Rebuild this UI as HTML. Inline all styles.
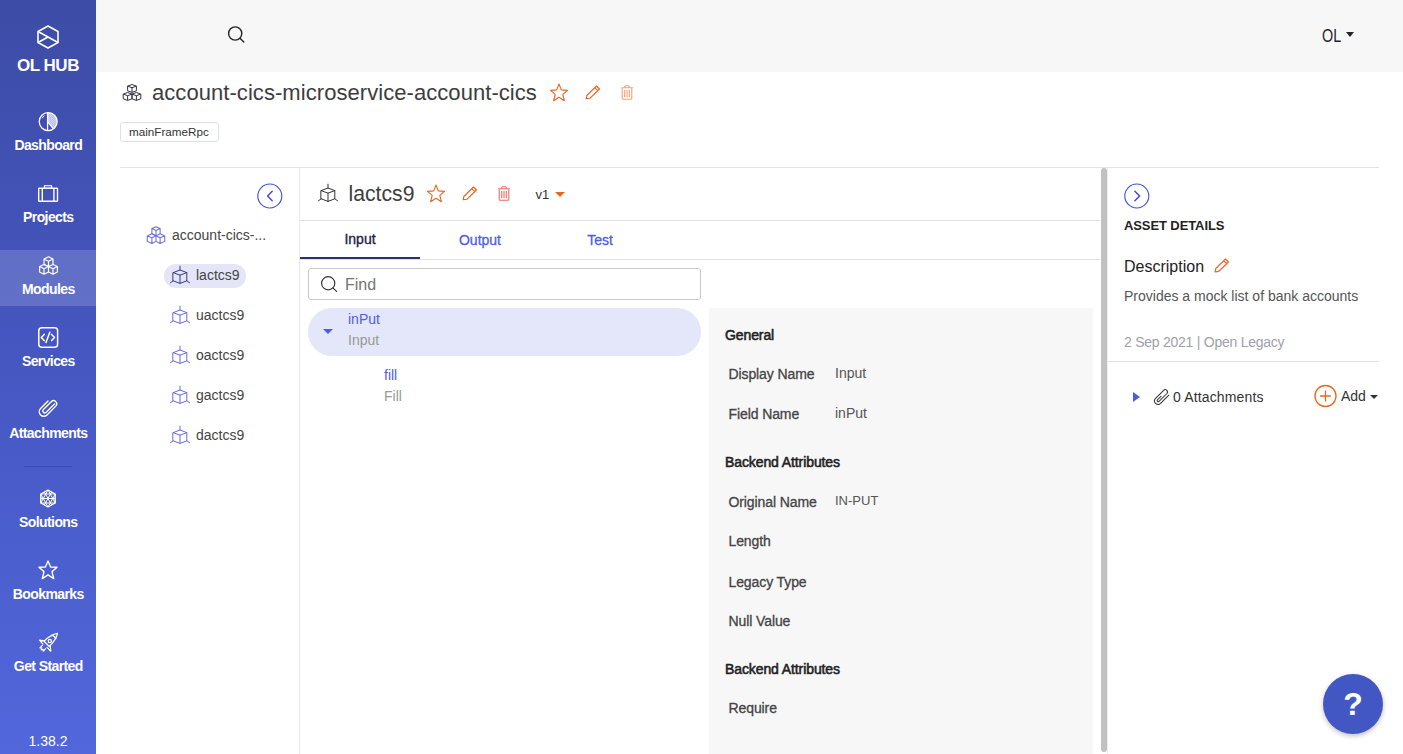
<!DOCTYPE html>
<html><head><meta charset="utf-8">
<style>
*{margin:0;padding:0;box-sizing:border-box}
html,body{width:1403px;height:754px;overflow:hidden;background:#fff;font-family:"Liberation Sans",sans-serif;color:#333}
.a{position:absolute;white-space:nowrap}
svg{position:absolute;overflow:visible}
#side{position:absolute;left:0;top:0;width:96px;height:754px;background:linear-gradient(180deg,#3d4ca6 0%,#4556c0 45%,#5267dc 100%)}
.nl{position:absolute;left:0;width:96px;text-align:center;color:#fff;font-weight:bold;font-size:14px;line-height:14px;letter-spacing:-0.6px;text-indent:0.6px}
#hdr{position:absolute;left:96px;top:0;width:1307px;height:72px;background:#f7f7f7}
.t14{font-size:14px;line-height:14px}
</style></head><body>
<div id="side">
  <!-- logo -->
  <svg style="left:37px;top:25px" width="22" height="24" viewBox="0 0 22 24" fill="none" stroke="#fff" stroke-width="1.6" stroke-linejoin="round">
    <path d="M11 1 L21 6.5 L21 17.5 L11 23 L1 17.5 L1 6.5 Z"/>
    <path d="M1 6.5 L21 17.5"/>
    <path d="M11 12 L1 17.5"/>
  </svg>
  <div class="a" style="left:0;width:96px;text-align:center;top:57px;color:#fff;font-weight:bold;font-size:17px;line-height:17px;letter-spacing:-0.5px">OL HUB</div>

  <!-- dashboard -->
  <svg style="left:38px;top:112px" width="20" height="20" viewBox="0 0 20 20" fill="none" stroke="#fff" stroke-width="1.3">
    <defs><pattern id="hat" width="2" height="2" patternUnits="userSpaceOnUse"><rect x="0" y="0" width="1" height="1" fill="#fff"/><rect x="1" y="1" width="1" height="1" fill="#fff"/></pattern></defs>
    <path d="M9.8 0.6 A9 9 0 0 1 15.6 16.6 L9.8 9.5 Z" fill="url(#hat)" fill-opacity="0.75" stroke="none"/>
    <circle cx="10.2" cy="9.6" r="9"/>
    <path d="M9.6 0.4 L9.6 18.6"/>
    <path d="M9.6 9.6 L15.2 16.6"/>
    <path d="M4.2 6.2 A6 6 0 0 1 6.5 3.6" stroke-width="1"/>
  </svg>
  <div class="nl" style="top:138px">Dashboard</div>

  <!-- projects -->
  <svg style="left:38px;top:185px" width="21" height="17" viewBox="0 0 21 17" fill="none" stroke="#fff" stroke-width="1.4">
    <rect x="0.7" y="3.3" width="18.8" height="13" rx="0.5"/>
    <rect x="6.4" y="0.7" width="7.2" height="2.6" stroke-width="1.1"/>
    <path d="M4.3 3.3 V16.3 M15.9 3.3 V16.3"/>
  </svg>
  <div class="nl" style="top:210px">Projects</div>

  <!-- modules (active) -->
  <div style="position:absolute;left:0;top:250px;width:96px;height:56px;background:rgba(255,255,255,0.16)"></div>
  <svg style="left:39px;top:256px" width="19" height="19" viewBox="0 0 19 19" fill="none" stroke="#fff" stroke-width="1.2" stroke-linejoin="round">
    <path d="M9.5 0.8 L14 3 L14 8.5 L9.5 10.5 L5 8.5 L5 3 Z M5 3 L9.5 5.2 L14 3 M9.5 5.2 V10.5"/>
    <path d="M5 8.5 L9.5 10.5 L9.5 16 L5 18.2 L0.6 16 L0.6 10.5 Z M0.6 10.5 L5 12.7 L9.5 10.5 M5 12.7 V18.2"/>
    <path d="M14 8.5 L18.4 10.5 L18.4 16 L14 18.2 L9.5 16 M9.5 10.5 L14 12.7 L18.4 10.5 M14 12.7 V18.2"/>
  </svg>
  <div class="nl" style="top:282px">Modules</div>

  <!-- services -->
  <svg style="left:38px;top:327px" width="21" height="21" viewBox="0 0 21 21" fill="none" stroke="#fff" stroke-width="1.5" stroke-linejoin="round" stroke-linecap="round">
    <rect x="0.8" y="0.8" width="18.8" height="19.4" rx="3"/>
    <path d="M6.2 7.4 L3.3 10.5 L6.2 13.6 M13.6 7.4 L16.5 10.5 L13.6 13.6 M11.8 5.2 L8 15.6"/>
  </svg>
  <div class="nl" style="top:354px">Services</div>

  <!-- attachments -->
  <svg style="left:39px;top:399px" width="19" height="20" viewBox="0 0 19 20" fill="none" stroke="#fff" stroke-width="1.4" stroke-linecap="round">
    <path d="M15.5 5 L7 13.5 A2 2 0 0 1 4.2 10.7 L12.5 2.4 A3.2 3.2 0 0 1 17 6.9 L8 15.9 A4.5 4.5 0 0 1 1.6 9.5 L9 2"/>
  </svg>
  <div class="nl" style="top:426px">Attachments</div>

  <div style="position:absolute;left:24px;top:466px;width:48px;height:1px;background:#3a4aa8"></div>

  <!-- solutions -->
  <svg style="left:39px;top:489px" width="18" height="19" viewBox="0 0 18 19" fill="none" stroke="#fff" stroke-width="1.1" stroke-linejoin="round">
    <path d="M9 1 L16.2 5 L16.2 14 L9 18 L1.8 14 L1.8 5 Z" stroke-width="1.4"/>
    <path d="M9 1 L16.2 14 L1.8 14 Z M9 18 L16.2 5 L1.8 5 Z M1.8 9.5 H16.2 M5.4 3 L12.6 16 M12.6 3 L5.4 16" stroke-width="1"/>
  </svg>
  <div class="nl" style="top:515px">Solutions</div>

  <!-- bookmarks -->
  <svg style="left:38px;top:560px" width="20" height="20" viewBox="0 0 20 20" fill="none" stroke="#fff" stroke-width="1.4" stroke-linejoin="round">
    <path d="M10 1 L12.6 7 L19 7.3 L14 11.6 L15.7 18.6 L10 14.8 L4.3 18.6 L6 11.6 L1 7.3 L7.4 7 Z"/>
  </svg>
  <div class="nl" style="top:587px">Bookmarks</div>

  <!-- get started -->
  <svg style="left:39px;top:633px" width="19" height="19" viewBox="0 0 19 19" fill="none" stroke="#fff" stroke-width="1.25" stroke-linejoin="round" stroke-linecap="round">
    <path d="M18.5 0.4 Q12 1.4 5 8.2 L10.3 13.5 Q17.2 6.6 18.5 0.4 Z"/>
    <path d="M12.8 2.2 Q15.6 3 16.9 5.8"/>
    <circle cx="10.8" cy="7.9" r="1.6"/>
    <path d="M5.4 7.8 L0.6 7.1 L3.9 11.1 M11.1 12.7 L11.8 18.2 L8 14.4"/>
    <path d="M3.4 12.4 L1 14.8 L2.7 15.2 L2.3 16.9 L4 16.5 L4.4 18.1 L6.6 15.7"/>
  </svg>
  <div class="nl" style="top:659px">Get Started</div>

  <div class="a t14" style="left:0;width:96px;text-align:center;top:734px;color:#fff">1.38.2</div>
</div>

<div id="hdr">
  <svg style="left:132px;top:26px" width="17" height="17" viewBox="0 0 17 17" fill="none" stroke="#222" stroke-width="1.4" stroke-linecap="round">
    <circle cx="7.2" cy="7.5" r="6.6"/>
    <path d="M12 12.3 L15.8 16"/>
  </svg>
  <div class="a" style="left:1226px;top:27.5px;font-size:17.5px;line-height:17px;color:#212529;transform:scaleX(0.82);transform-origin:0 0">OL</div>
  <div style="position:absolute;left:1249.8px;top:31.5px;width:0;height:0;border-left:4.6px solid transparent;border-right:4.6px solid transparent;border-top:5px solid #212529"></div>
</div>


<!-- title -->
<svg style="left:122px;top:84px" width="20" height="18" viewBox="0 0 20 18" fill="none" stroke="#30324a" stroke-width="1" stroke-linejoin="round">
  <path d="M10.0 0.5 L14.4 2.1 L14.4 6.8 L10.0 8.4 L5.6 6.8 L5.6 2.1 Z M5.6 2.1 L10.0 3.7 L14.4 2.1 M10.0 3.7 V8.4 M5.6 8.5 L10.0 10.1 L10.0 14.8 L5.6 16.4 L1.2 14.8 L1.2 10.1 Z M1.2 10.1 L5.6 11.7 L10.0 10.1 M5.6 11.7 V16.4 M14.4 8.5 L18.8 10.1 L18.8 14.8 L14.4 16.4 L10.0 14.8 L10.0 10.1 Z M10.0 10.1 L14.4 11.7 L18.8 10.1 M14.4 11.7 V16.4"/>
</svg>
<div class="a" style="left:152px;top:81.8px;font-size:22px;line-height:22px;letter-spacing:0.06px;color:#3d3d3d">account-cics-microservice-account-cics</div>
<svg style="left:549px;top:83px" width="20" height="19" viewBox="0 0 20 19" fill="none" stroke="#ec6420" stroke-width="1.1" stroke-linejoin="round">
  <path d="M10 1 L12.3 6.9 L18.5 7.4 L13.8 11.4 L15.4 17.7 L10 14.3 L4.6 17.7 L6.2 11.4 L1.5 7.4 L7.7 6.9 Z"/>
</svg>
<svg style="left:585px;top:85px" width="16" height="15" viewBox="0 0 16 15" fill="none" stroke="#e8631f" stroke-width="1.1" stroke-linejoin="round">
  <path d="M1.2 13.8 L1.8 10.5 L11.5 1 L14.5 4 L4.8 13.3 Z M9.8 2.7 L12.8 5.7"/>
</svg>
<svg style="left:620px;top:85px" width="14" height="15" viewBox="0 0 14 15" fill="none" stroke="#f2a378" stroke-width="1.1" stroke-linejoin="round">
  <path d="M1.2 2.8 H12.8 M4.8 2.8 V1.6 Q4.8 0.7 5.7 0.7 H8.3 Q9.2 0.7 9.2 1.6 V2.8 M2.2 2.8 V13.4 Q2.2 14.3 3.1 14.3 H10.9 Q11.8 14.3 11.8 13.4 V2.8 M4.7 5 V12.3 M7 5 V12.3 M9.3 5 V12.3"/>
</svg>
<div style="position:absolute;left:120px;top:122px;width:99px;height:20px;border:1px solid #dee2e6;border-radius:3px"></div>
<div class="a" style="left:129px;top:126px;font-size:11.7px;line-height:12px;color:#333">mainFrameRpc</div>

<div style="position:absolute;left:120px;top:167px;width:1259px;height:1px;background:#dee2e6"></div>

<!-- left tree -->
<div style="position:absolute;left:299px;top:168px;width:1px;height:586px;background:#e8eaef"></div>
<svg style="left:257px;top:184px" width="26" height="24" viewBox="0 0 26 24" fill="none" stroke="#3f51e0" stroke-width="1.1" stroke-linecap="round" stroke-linejoin="round">
  <circle cx="12.8" cy="12" r="12"/>
  <path d="M15.2 7.3 L10.6 12 L15.2 16.7" stroke="#4848dc" stroke-width="1.5"/>
</svg>
<svg style="left:146px;top:226px" width="20" height="19" viewBox="0 0 19 18" fill="none" stroke="#6e6ee0" stroke-width="1" stroke-linejoin="round">
  <path d="M9.5 0.6 L13.4 2.4 L13.4 7.4 L9.5 9.2 L5.6 7.4 L5.6 2.4 Z M5.6 2.4 L9.5 4.2 L13.4 2.4 M9.5 4.2 V9.2"/>
  <path d="M5.6 7.4 L9.5 9.2 L9.5 14.6 L5.6 16.6 L1.2 14.6 L1.2 9.4 Z M1.2 9.4 L5.6 11.2 L9.5 9.2 M5.6 11.2 V16.6"/>
  <path d="M13.4 7.4 L17.8 9.4 L17.8 14.6 L13.4 16.6 L9.5 14.6 M9.5 9.2 L13.4 11.2 L17.8 9.4 M13.4 11.2 V16.6"/>
</svg>
<div class="a t14" style="left:172px;top:228px;color:#444">account-cics-...</div>

<div style="position:absolute;left:164px;top:264px;width:82px;height:24px;border-radius:12px;background:#e4e6f8"></div>
<svg style="left:170px;top:266px" width="20" height="18" viewBox="0 0 20 18" fill="none" stroke="#34388a" stroke-width="1" stroke-linejoin="round" stroke-linecap="round">
  <path d="M10 0.2 V4 M3.2 6.6 L10 4 L16.8 6.6 L16.8 14.8 L10 17.4 L3.2 14.8 Z M3.2 6.6 L10 9.2 L16.8 6.6 M10 9.2 V17.4 M3.2 14.8 L0.4 16.8 M16.8 14.8 L19.6 16.8"/>
</svg>
<div class="a t14" style="left:196px;top:267.8px;color:#444">lactcs9</div>
<svg style="left:170px;top:306px" width="20" height="18" viewBox="0 0 20 18" fill="none" stroke="#6a6ae6" stroke-width="1" stroke-linejoin="round" stroke-linecap="round">
  <path d="M10 0.2 V4 M3.2 6.6 L10 4 L16.8 6.6 L16.8 14.8 L10 17.4 L3.2 14.8 Z M3.2 6.6 L10 9.2 L16.8 6.6 M10 9.2 V17.4 M3.2 14.8 L0.4 16.8 M16.8 14.8 L19.6 16.8"/>
</svg>
<div class="a t14" style="left:196px;top:307.8px;color:#444">uactcs9</div>
<svg style="left:170px;top:346px" width="20" height="18" viewBox="0 0 20 18" fill="none" stroke="#6a6ae6" stroke-width="1" stroke-linejoin="round" stroke-linecap="round">
  <path d="M10 0.2 V4 M3.2 6.6 L10 4 L16.8 6.6 L16.8 14.8 L10 17.4 L3.2 14.8 Z M3.2 6.6 L10 9.2 L16.8 6.6 M10 9.2 V17.4 M3.2 14.8 L0.4 16.8 M16.8 14.8 L19.6 16.8"/>
</svg>
<div class="a t14" style="left:196px;top:347.8px;color:#444">oactcs9</div>
<svg style="left:170px;top:386px" width="20" height="18" viewBox="0 0 20 18" fill="none" stroke="#6a6ae6" stroke-width="1" stroke-linejoin="round" stroke-linecap="round">
  <path d="M10 0.2 V4 M3.2 6.6 L10 4 L16.8 6.6 L16.8 14.8 L10 17.4 L3.2 14.8 Z M3.2 6.6 L10 9.2 L16.8 6.6 M10 9.2 V17.4 M3.2 14.8 L0.4 16.8 M16.8 14.8 L19.6 16.8"/>
</svg>
<div class="a t14" style="left:196px;top:387.8px;color:#444">gactcs9</div>
<svg style="left:170px;top:426px" width="20" height="18" viewBox="0 0 20 18" fill="none" stroke="#6a6ae6" stroke-width="1" stroke-linejoin="round" stroke-linecap="round">
  <path d="M10 0.2 V4 M3.2 6.6 L10 4 L16.8 6.6 L16.8 14.8 L10 17.4 L3.2 14.8 Z M3.2 6.6 L10 9.2 L16.8 6.6 M10 9.2 V17.4 M3.2 14.8 L0.4 16.8 M16.8 14.8 L19.6 16.8"/>
</svg>
<div class="a t14" style="left:196px;top:427.8px;color:#444">dactcs9</div>

<!-- middle header -->
<svg style="left:318px;top:184px" width="20" height="18" viewBox="0 0 20 18" fill="none" stroke="#333" stroke-width="1" stroke-linejoin="round" stroke-linecap="round">
  <path d="M10 0.2 V4 M3.2 6.6 L10 4 L16.8 6.6 L16.8 14.8 L10 17.4 L3.2 14.8 Z M3.2 6.6 L10 9.2 L16.8 6.6 M10 9.2 V17.4 M3.2 14.8 L0.4 16.8 M16.8 14.8 L19.6 16.8"/>
</svg>
<div class="a" style="left:348.5px;top:183.4px;font-size:21.2px;line-height:22px;color:#3d3d3d">lactcs9</div>
<svg style="left:426px;top:184px" width="20" height="19" viewBox="0 0 20 19" fill="none" stroke="#ec6420" stroke-width="1.1" stroke-linejoin="round">
  <path d="M10 1 L12.3 6.9 L18.5 7.4 L13.8 11.4 L15.4 17.7 L10 14.3 L4.6 17.7 L6.2 11.4 L1.5 7.4 L7.7 6.9 Z"/>
</svg>
<svg style="left:462px;top:186px" width="16" height="15" viewBox="0 0 16 15" fill="none" stroke="#e8631f" stroke-width="1.1" stroke-linejoin="round">
  <path d="M1.2 13.8 L1.8 10.5 L11.5 1 L14.5 4 L4.8 13.3 Z M9.8 2.7 L12.8 5.7"/>
</svg>
<svg style="left:497px;top:186px" width="14" height="15" viewBox="0 0 14 15" fill="none" stroke="#ec6e62" stroke-width="1.1" stroke-linejoin="round">
  <path d="M1.2 2.8 H12.8 M4.8 2.8 V1.6 Q4.8 0.7 5.7 0.7 H8.3 Q9.2 0.7 9.2 1.6 V2.8 M2.2 2.8 V13.4 Q2.2 14.3 3.1 14.3 H10.9 Q11.8 14.3 11.8 13.4 V2.8 M4.7 5 V12.3 M7 5 V12.3 M9.3 5 V12.3"/>
</svg>
<div class="a t14" style="left:535.5px;top:188.3px;font-size:13px;line-height:13px;color:#333">v1</div>
<div style="position:absolute;left:555px;top:192px;width:0;height:0;border-left:5px solid transparent;border-right:5px solid transparent;border-top:5px solid #e8681f"></div>

<div style="position:absolute;left:300px;top:220px;width:800px;height:1px;background:#dee2e6"></div>
<div style="position:absolute;left:300px;top:259px;width:800px;height:1px;background:#dee2e6"></div>
<div style="position:absolute;left:300px;top:257px;width:120px;height:2px;background:#2b3170"></div>
<div class="a t14" style="left:300px;width:120px;text-align:center;top:232px;color:#1c2340;-webkit-text-stroke:0.35px #1c2340">Input</div>
<div class="a t14" style="left:420px;width:120px;text-align:center;top:232.8px;color:#4d5ee6;-webkit-text-stroke:0.3px #4d5ee6">Output</div>
<div class="a t14" style="left:540px;width:120px;text-align:center;top:232.6px;color:#4d5ee6;-webkit-text-stroke:0.3px #4d5ee6">Test</div>

<!-- find -->
<div style="position:absolute;left:308px;top:268px;width:393px;height:32px;border:1px solid #c6cacf;border-radius:3px"></div>
<svg style="left:321px;top:276px" width="17" height="16" viewBox="0 0 17 16" fill="none" stroke="#333" stroke-width="1.15" stroke-linecap="round">
  <circle cx="7.2" cy="7.2" r="6.6"/>
  <path d="M11.8 11.8 L15.6 15.4"/>
</svg>
<div class="a" style="left:345px;top:277.2px;font-size:16px;line-height:16px;color:#757575">Find</div>

<!-- tree -->
<div style="position:absolute;left:308px;top:308px;width:393px;height:48px;border-radius:24px;background:#e4e7f9"></div>
<div style="position:absolute;left:322.5px;top:329px;width:0;height:0;border-left:5.5px solid transparent;border-right:5.5px solid transparent;border-top:5.5px solid #4b5de0"></div>
<div class="a t14" style="left:348px;top:312px;color:#5060e0">inPut</div>
<div class="a t14" style="left:348px;top:333px;color:#999">Input</div>
<div class="a t14" style="left:384px;top:368px;color:#5060e0">fill</div>
<div class="a t14" style="left:384px;top:389px;color:#999">Fill</div>

<!-- details panel -->
<div style="position:absolute;left:709px;top:308px;width:384px;height:446px;background:#f7f7f7"></div>
<div class="a t14" style="left:725px;top:328.3px;color:#222;-webkit-text-stroke:0.55px #222;letter-spacing:-0.1px">General</div>
<div class="a t14" style="left:728.5px;top:367.1px;color:#444;-webkit-text-stroke:0.3px #444;letter-spacing:-0.1px">Display Name</div>
<div class="a t14" style="left:835px;top:365.8px;color:#555">Input</div>
<div class="a t14" style="left:728.5px;top:407.1px;color:#444;-webkit-text-stroke:0.3px #444;letter-spacing:-0.1px">Field Name</div>
<div class="a t14" style="left:835px;top:405.8px;color:#555">inPut</div>
<div class="a t14" style="left:725px;top:455.1px;color:#222;-webkit-text-stroke:0.55px #222;letter-spacing:-0.1px">Backend Attributes</div>
<div class="a t14" style="left:728.5px;top:494.8px;color:#444;-webkit-text-stroke:0.3px #444;letter-spacing:-0.1px">Original Name</div>
<div class="a t14" style="left:835px;top:493.5px;color:#555;font-size:13px">IN-PUT</div>
<div class="a t14" style="left:728.5px;top:534.4px;color:#444;-webkit-text-stroke:0.3px #444;letter-spacing:-0.1px">Length</div>
<div class="a t14" style="left:728.5px;top:574.6px;color:#444;-webkit-text-stroke:0.3px #444;letter-spacing:-0.1px">Legacy Type</div>
<div class="a t14" style="left:728.5px;top:614.4px;color:#444;-webkit-text-stroke:0.3px #444;letter-spacing:-0.1px">Null Value</div>
<div class="a t14" style="left:725px;top:662.1px;color:#222;-webkit-text-stroke:0.55px #222;letter-spacing:-0.1px">Backend Attributes</div>
<div class="a t14" style="left:728.5px;top:701.1px;color:#444;-webkit-text-stroke:0.3px #444;letter-spacing:-0.1px">Require</div>

<!-- scrollbar -->
<div style="position:absolute;left:1107px;top:168px;width:1px;height:586px;background:#eceef2"></div>
<div style="position:absolute;left:1101px;top:168px;width:6px;height:584px;border-radius:3px;background:#c1c1c1"></div>

<!-- right panel -->
<svg style="left:1124px;top:184px" width="26" height="24" viewBox="0 0 26 24" fill="none" stroke="#3f51e0" stroke-width="1.1" stroke-linecap="round" stroke-linejoin="round">
  <circle cx="12.8" cy="12" r="12"/>
  <path d="M10.9 7.3 L15.6 12 L10.9 16.7" stroke="#4848dc" stroke-width="1.5"/>
</svg>
<div class="a t14" style="left:1124px;top:219.2px;color:#222;font-weight:bold;font-size:13px;letter-spacing:-0.1px">ASSET DETAILS</div>
<div class="a" style="left:1124px;top:258.9px;font-size:16px;line-height:16px;color:#222">Description</div>
<svg style="left:1214px;top:258px" width="16" height="15" viewBox="0 0 16 15" fill="none" stroke="#e9683a" stroke-width="1.25" stroke-linejoin="round">
  <path d="M1.2 13.8 L1.8 10.5 L11.5 1 L14.5 4 L4.8 13.3 Z M9.8 2.7 L12.8 5.7"/>
</svg>
<div class="a t14" style="left:1124px;top:289px;color:#555">Provides a mock list of bank accounts</div>
<div class="a t14" style="left:1124px;top:334.8px;color:#a0a0a8;letter-spacing:-0.25px">2 Sep 2021 | Open Legacy</div>
<div style="position:absolute;left:1108px;top:361px;width:271px;height:1px;background:#dee2e6"></div>
<div style="position:absolute;left:1133px;top:391.5px;width:0;height:0;border-top:5.5px solid transparent;border-bottom:5.5px solid transparent;border-left:7px solid #4b5de0"></div>
<svg style="left:1152px;top:387px" width="18" height="18" viewBox="0 0 18 18" fill="none" stroke="#333" stroke-width="1.05" stroke-linecap="round">
  <path d="M16.8 8.2 L8.6 16.3 A3.5 3.5 0 0 1 3.6 11.3 L11.6 3.3 A2.3 2.3 0 0 1 14.9 6.5 L6.8 14.5 A1.1 1.1 0 0 1 5.3 13 L9 9.3"/>
</svg>
<div class="a t14" style="left:1173px;top:389.8px;color:#333;letter-spacing:0.15px">0 Attachments</div>
<svg style="left:1314px;top:385px" width="23" height="22" viewBox="0 0 23 22" fill="none" stroke="#e8681f" stroke-width="1.3" stroke-linecap="round">
  <circle cx="11.5" cy="11" r="10.5"/>
  <path d="M11.5 6 V16 M6.5 11 H16.5"/>
</svg>
<div class="a t14" style="left:1341px;top:389.2px;color:#333">Add</div>
<div style="position:absolute;left:1369.5px;top:394.5px;width:0;height:0;border-left:4px solid transparent;border-right:4px solid transparent;border-top:4px solid #333"></div>

<!-- help -->
<div style="position:absolute;left:1323px;top:674px;width:60px;height:60px;border-radius:30px;background:#4357c4;box-shadow:0 2px 5px rgba(0,0,0,0.25)"></div>
<div class="a" style="left:1323px;width:60px;text-align:center;top:688px;font-size:32px;line-height:32px;font-weight:bold;color:#fff">?</div>
</body></html>
